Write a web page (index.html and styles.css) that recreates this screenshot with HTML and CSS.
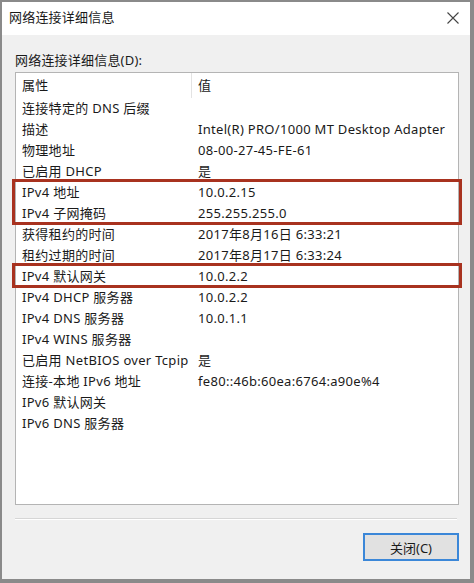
FILE: index.html
```html
<!DOCTYPE html>
<html lang="zh-CN">
<head>
<meta charset="utf-8">
<title>网络连接详细信息</title>
<link rel="stylesheet" href="styles.css">
</head>
<body>
<div class="window">
  <div class="titlebar">
    <span class="title">网络连接详细信息</span>
    <svg class="close" width="12" height="12" viewBox="0 0 12 12"><path d="M0.5 0.5 L11.5 11.5 M11.5 0.5 L0.5 11.5" stroke="#444" stroke-width="1.1" fill="none"/></svg>
  </div>
  <div class="content">
    <div class="label">网络连接详细信息(D):</div>
    <div class="list">
      <div class="row header"><div class="c1">属性</div><div class="c2">值</div></div>
      <div class="row"><div class="c1">连接特定的 DNS 后缀</div><div class="c2"></div></div>
      <div class="row"><div class="c1">描述</div><div class="c2">Intel(R) PRO/1000 MT Desktop Adapter</div></div>
      <div class="row"><div class="c1">物理地址</div><div class="c2">08-00-27-45-FE-61</div></div>
      <div class="row"><div class="c1">已启用 DHCP</div><div class="c2">是</div></div>
      <div class="group g1">
        <div class="row"><div class="c1">IPv4 地址</div><div class="c2">10.0.2.15</div></div>
        <div class="row"><div class="c1">IPv4 子网掩码</div><div class="c2">255.255.255.0</div></div>
      </div>
      <div class="row"><div class="c1">获得租约的时间</div><div class="c2">2017年8月16日 6:33:21</div></div>
      <div class="row"><div class="c1">租约过期的时间</div><div class="c2">2017年8月17日 6:33:24</div></div>
      <div class="group g2">
        <div class="row"><div class="c1">IPv4 默认网关</div><div class="c2">10.0.2.2</div></div>
      </div>
      <div class="row"><div class="c1">IPv4 DHCP 服务器</div><div class="c2">10.0.2.2</div></div>
      <div class="row"><div class="c1">IPv4 DNS 服务器</div><div class="c2">10.0.1.1</div></div>
      <div class="row"><div class="c1">IPv4 WINS 服务器</div><div class="c2"></div></div>
      <div class="row"><div class="c1">已启用 NetBIOS over Tcpip</div><div class="c2">是</div></div>
      <div class="row"><div class="c1">连接-本地 IPv6 地址</div><div class="c2">fe80::46b:60ea:6764:a90e%4</div></div>
      <div class="row"><div class="c1">IPv6 默认网关</div><div class="c2"></div></div>
      <div class="row"><div class="c1">IPv6 DNS 服务器</div><div class="c2"></div></div>
    </div>
    <div class="sep"></div>
    <div class="footer">
      <button class="btn">关闭(C)</button>
    </div>
  </div>
</div>
</body>
</html>
```

FILE: styles.css
```css
html, body {
  margin: 0;
  padding: 0;
  background: #8a8a8a;
}
body {
  font-family: "Noto Sans", "Noto Sans CJK SC", sans-serif;
  font-size: 13px;
  color: #1a1a1a;
}
.window {
  width: 474px;
  height: 583px;
  box-sizing: border-box;
  border-style: solid;
  border-color: #8a8a8a;
  border-width: 2px 4px 4px 2px;
  background: #f0f0f0;
  display: flex;
  flex-direction: column;
}
.titlebar {
  height: 33px;
  background: #ffffff;
  display: flex;
  align-items: center;
  justify-content: space-between;
  padding: 0 11px 0 7px;
  flex-shrink: 0;
}
.title {
  font-size: 13px;
  line-height: 17px;
  padding-bottom: 2px;
  letter-spacing: 0.2px;
}
.close {
  display: block;
  margin-bottom: 1px;
}
.content {
  flex: 1;
  display: flex;
  flex-direction: column;
  padding: 16px 11px 0 13px;
}
.label {
  line-height: 18px;
  height: 18px;
  margin-bottom: 3px;
  letter-spacing: 0.2px;
}
.list {
  height: 433px;
  box-sizing: border-box;
  background: #ffffff;
  border: 1px solid #b4b4b4;
  display: flex;
  flex-direction: column;
  letter-spacing: 0.3px;
}
.row {
  display: flex;
  height: 21px;
  line-height: 21px;
  white-space: nowrap;
}
.row .c1 {
  width: 170px;
  padding-left: 6px;
  flex-shrink: 0;
}
.row .c2 {
  padding-left: 6px;
  flex: 1;
}
.row.header {
  height: 25px;
  line-height: 25px;
}
.row.header .c1 {
  width: 169px;
  border-right: 1px solid #e3e3e3;
  padding-top: 2px;
  line-height: 21px;
  height: 23px;
}
.row.header .c2 {
  padding-top: 2px;
  line-height: 21px;
}
.group {
  position: relative;
}
.group::after {
  content: "";
  position: absolute;
  top: -3px;
  bottom: -1px;
  left: -4px;
  right: -4px;
  border: 3px solid #a8321f;
  pointer-events: none;
}
.sep {
  margin-top: 13px;
  margin-right: 2px;
  border-top: 1px solid #d6d6d6;
  border-bottom: 1px solid #ffffff;
}
.footer {
  display: flex;
  justify-content: flex-end;
  padding-top: 13px;
}
.btn {
  width: 96px;
  height: 28px;
  box-sizing: border-box;
  border: 2px solid #3b87d8;
  background: #e1e1e1;
  font-family: "Noto Sans", "Noto Sans CJK SC", sans-serif;
  font-size: 13px;
  color: #1a1a1a;
  padding: 0;
  margin: 0;
}
```
